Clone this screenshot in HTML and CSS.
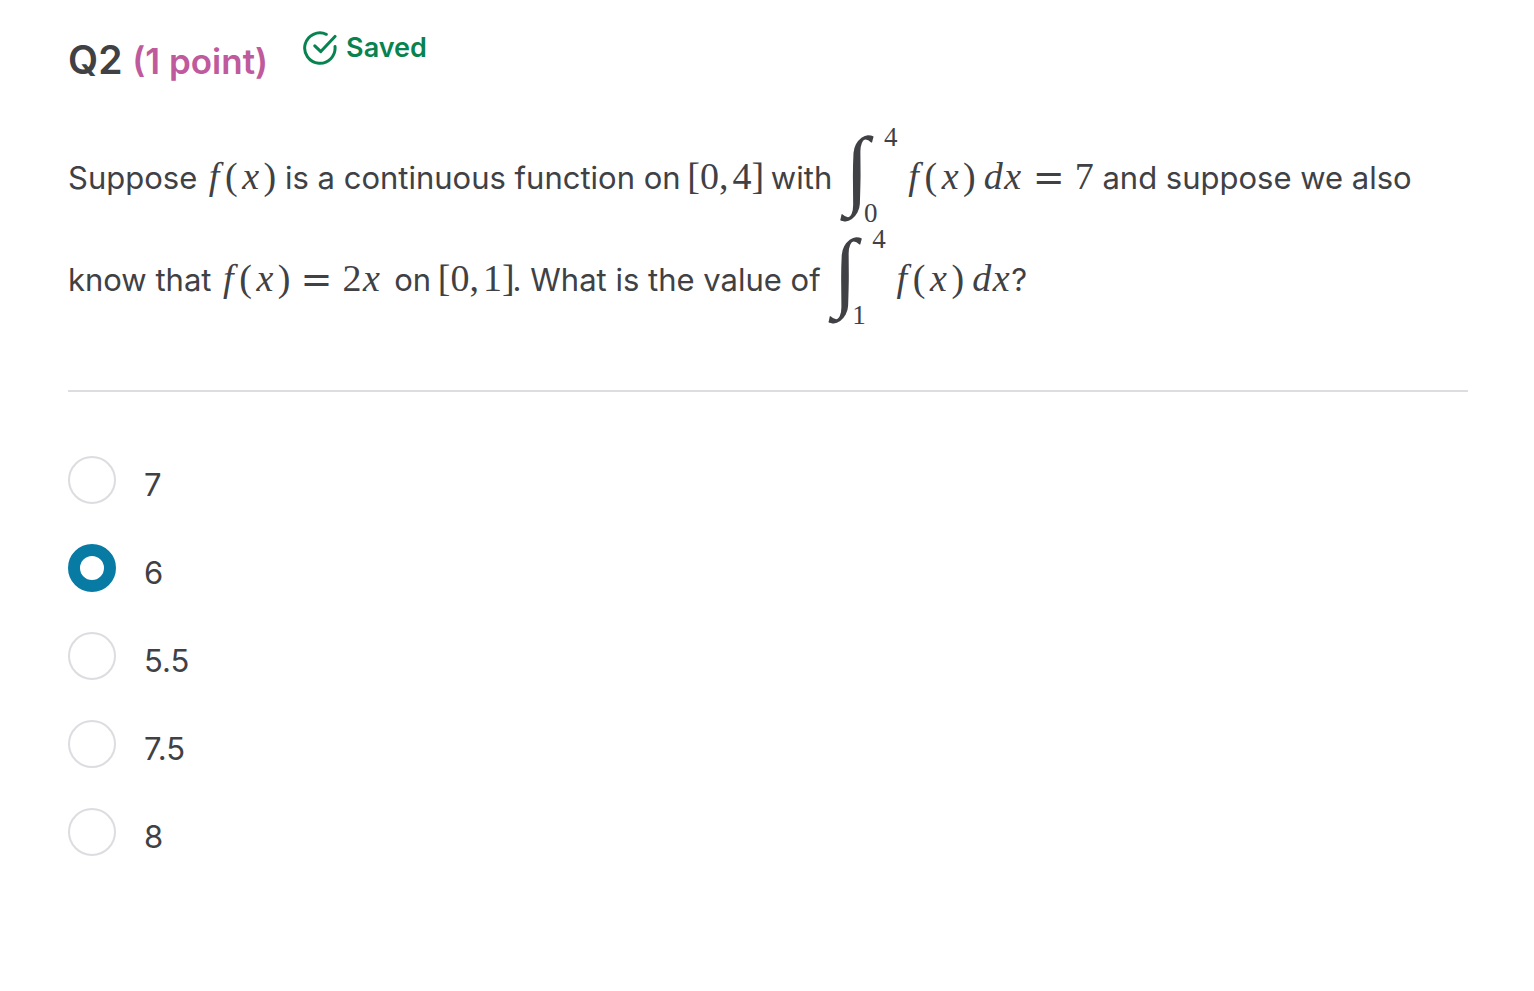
FILE: index.html
```html
<!DOCTYPE html>
<html lang="en">
<head>
<meta charset="utf-8">
<meta name="viewport" content="width=device-width, initial-scale=1">
<title>Question 2</title>
<link rel="stylesheet" href="styles.css">
</head>
<body>
<main class="question">
  <header class="header">
    <h1 class="title">Q2 <span class="points">(1 point)</span></h1>
    <div class="status">
      <svg class="status-icon" viewBox="0 0 34 34" aria-hidden="true">
        <path d="M23.3 3.3A15.2 15.2 0 1 0 32 15.5"/>
        <path d="M11.8 14.8l6 5.8L32 5.4"/>
      </svg>
      <span>Saved</span>
    </div>
  </header>
  <form>
    <p class="prompt" id="prompt"><span>Suppose</span> <span class="math"><i class="f">f</i><span>(</span><i class="x">x</i><span>)</span></span> <span>is a continuous function on</span> <span class="math interval"><span>[</span><span>0,</span><span class="last">4</span><span>]</span></span> <span>with</span> <span class="integral"><i class="sign">∫</i><span class="limits"><span class="upper">4</span><span class="lower">0</span></span></span><span class="math"><i class="f">f</i><span>(</span><i class="x">x</i><span>)</span></span><span class="math dx"><i>d</i><i class="x">x</i></span><span class="math equals">=</span><span class="math">7</span> <span>and suppose we also</span> <span>know that</span> <span class="math"><i class="f">f</i><span>(</span><i class="x">x</i><span>)</span></span><span class="math equals">=</span><span class="math product">2<i class="x">x</i></span> <span>on</span> <span class="math interval"><span>[</span><span>0,</span><span class="last">1</span><span>]</span></span><span>. What is the value of</span> <span class="integral"><i class="sign">∫</i><span class="limits"><span class="upper">4</span><span class="lower">1</span></span></span><span class="math"><i class="f">f</i><span>(</span><i class="x">x</i><span>)</span></span><span class="math dx"><i>d</i><i class="x">x</i></span><span>?</span></p>
    <div class="options" role="radiogroup" aria-labelledby="prompt">
      <label class="option"><input class="radio" type="radio" name="answer" value="7"><span class="answer">7</span></label>
      <label class="option"><input class="radio" type="radio" name="answer" value="6" checked><span class="answer">6</span></label>
      <label class="option"><input class="radio" type="radio" name="answer" value="5.5"><span class="answer">5.5</span></label>
      <label class="option"><input class="radio" type="radio" name="answer" value="7.5"><span class="answer">7.5</span></label>
      <label class="option"><input class="radio" type="radio" name="answer" value="8"><span class="answer">8</span></label>
    </div>
  </form>
</main>
</body>
</html>
```
FILE: styles.css
```css
* { box-sizing: border-box; }
body {
  margin: 0;
  background: #fff;
  color: #404145;
  font: 31px/48px Inter, sans-serif;
}
.question { padding: 28px 66px 40px 68px; }
.header {
  display: flex;
  align-items: flex-start;
  gap: 35px;
}
.title {
  margin: 8px 0 0;
  font-size: 39px;
  font-weight: 600;
  line-height: 48px;
}
.points { color: #bf5a9c; font-size: 35px; }
.status {
  display: flex;
  align-items: center;
  gap: 9px;
  height: 40px;
  color: #078350;
  font-size: 27px;
  font-weight: 600;
}
.status-icon {
  width: 34px;
  height: 34px;
  fill: none;
  stroke: currentColor;
  stroke-width: 3;
  stroke-linecap: round;
  stroke-linejoin: round;
}
.prompt {
  margin: 0;
  padding: 42px 0 59px;
  border-bottom: 2px solid #dcdce1;
  line-height: 102px;
}
.math {
  display: inline-flex;
  gap: 3px;
  font: 38px/48px "Liberation Serif", serif;
}
.f { width: 16px; text-align: center; }
.x { width: 20px; text-align: center; }
.interval { gap: 0; margin: 0 -2px; }
.last { margin-left: 4px; }
.dx { gap: 0; margin-left: 8px; }
.equals {
  margin: 0 11px;
  font-family: "DejaVu Math TeX Gyre", "Liberation Serif", serif;
}
.product { gap: 0; margin-right: 4px; }
.integral {
  display: inline-flex;
  height: 112px;
  margin: -8px 8px -8px 4px;
  padding-bottom: 12px;
  vertical-align: middle;
  font-family: "Liberation Serif", serif;
}
.sign { width: 31px; font-size: 88px; line-height: 88px; }
.limits {
  display: flex;
  flex-direction: column;
  justify-content: space-between;
  font-size: 27px;
  line-height: 24px;
}
.upper { margin-left: 8px; }
.lower { margin-left: -12px; }
.options {
  display: flex;
  flex-direction: column;
  gap: 40px;
  padding-top: 64px;
}
.option {
  display: flex;
  align-self: flex-start;
  gap: 28px;
  height: 48px;
}
.radio {
  appearance: none;
  width: 48px;
  height: 48px;
  margin: 0;
  border: 2px solid #dcdce1;
  border-radius: 50%;
  background: #fff;
}
.radio:checked { border: 12px solid #087ba5; }
.answer { padding-top: 5px; }
```
